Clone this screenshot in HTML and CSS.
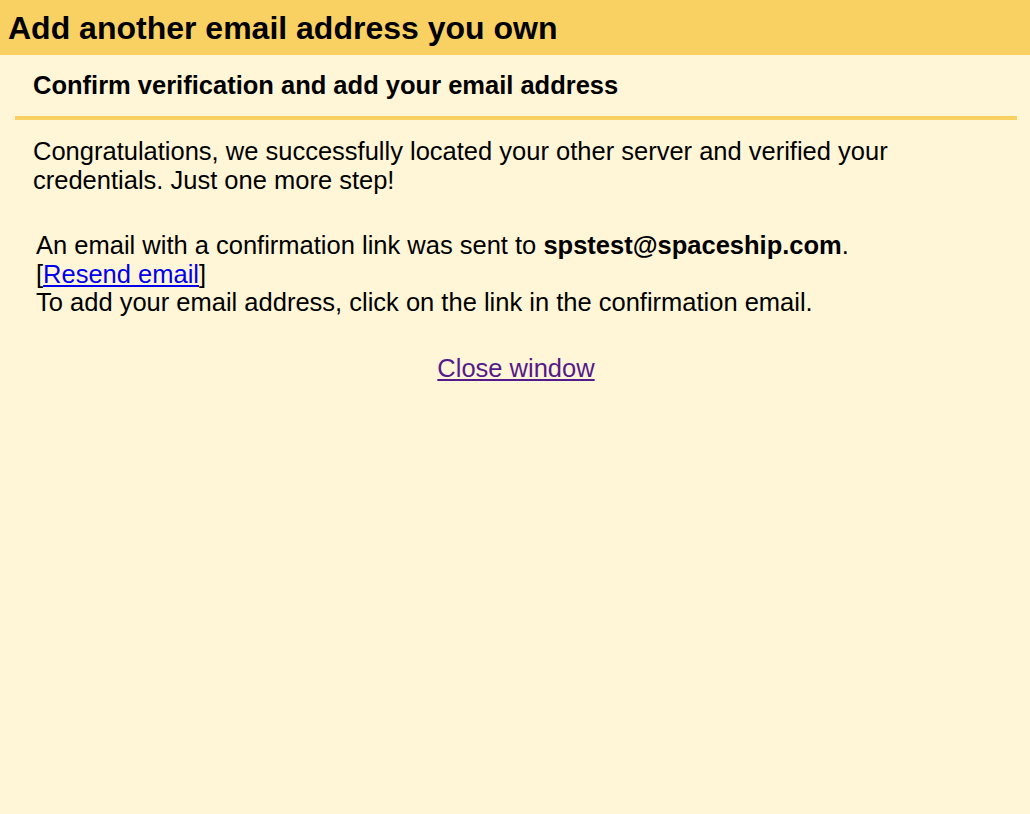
FILE: index.html
```html
<!DOCTYPE html>
<html lang="en">
<head>
<meta charset="utf-8">
<title>Add another email address you own</title>
<link rel="stylesheet" href="styles.css">
</head>
<body>
  <header class="title-bar">Add another email address you own</header>
  <main class="content">
    <h2 class="subhead">Confirm verification and add your email address</h2>
    <div class="divider"></div>
    <p class="intro">Congratulations, we successfully located your other server and verified your credentials. Just one more step!</p>
    <div class="notice">
      An email with a confirmation link was sent to <b>spstest@spaceship.com</b>.<br>
      [<a class="link" href="#">Resend email</a>]<br>
      To add your email address, click on the link in the confirmation email.
    </div>
    <div class="close-row"><a class="link visited" href="#">Close window</a></div>
  </main>
</body>
</html>
```
FILE: styles.css
```css
html, body {
  margin: 0;
  padding: 0;
  background: #fff6d8;
}
body {
  font-family: "Liberation Sans", Arial, Helvetica, sans-serif;
  color: #000;
  min-height: 814px;
}
.title-bar {
  background: #f9d162;
  height: 55px;
  line-height: 57px;
  overflow: hidden;
  padding-left: 8px;
  font-size: 32px;
  font-weight: bold;
  white-space: nowrap;
}
.content {
  padding: 0 13px 0 15px;
}
.subhead {
  margin: 0;
  padding-left: 18px;
  height: 61px;
  line-height: 61px;
  font-size: 25.5px;
  font-weight: bold;
}
.divider {
  height: 4px;
  background: #f9d162;
}
.intro {
  margin: 17px 0 0;
  padding-left: 18px;
  font-size: 25.5px;
  line-height: 29px;
  max-width: 880px;
}
.notice {
  margin-top: 36px;
  padding-left: 21px;
  font-size: 25.5px;
  line-height: 28.5px;
}
.close-row {
  margin-top: 37px;
  text-align: center;
  font-size: 25.5px;
  line-height: 29px;
}
.link {
  color: #0000ee;
  text-decoration: underline;
}
.link.visited {
  color: #551a8b;
}
```
